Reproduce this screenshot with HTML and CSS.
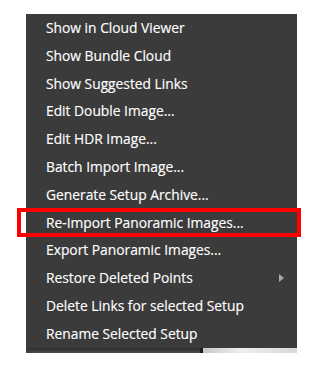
FILE: index.html
```html
<!DOCTYPE html>
<html lang="en">
<head>
  <meta charset="UTF-8" />
  <title>Context Menu</title>
  <link rel="stylesheet" href="styles.css">
</head>
<body>
  <div class="menu">
    <ul class="items">
      <li>Show in Cloud Viewer</li>
      <li>Show Bundle Cloud</li>
      <li>Show Suggested Links</li>
      <li>Edit Double Image...</li>
      <li>Edit HDR Image...</li>
      <li>Batch Import Image...</li>
      <li>Generate Setup Archive...</li>
      <li class="marked">Re-Import Panoramic Images...</li>
      <li>Export Panoramic Images...</li>
      <li class="sub">Restore Deleted Points <span class="arrow"></span></li>
      <li>Delete Links for selected Setup</li>
      <li>Rename Selected Setup</li>
    </ul>
    <div class="under">
      <div class="under-dark"></div>
      <div class="under-light"></div>
    </div>
  </div>
</body>
</html>
```

FILE: styles.css
```css
body {
  margin: 0;
  background: #fff;
  font-family: 'Open Sans', 'Segoe UI', sans-serif;
}
.menu {
  margin: 14px 0 0 26px;
  width: 271px;
}
.items {
  list-style: none;
  margin: 0;
  padding: 0;
  background: #3b3b3b;
}
.items li {
  position: relative;
  height: 27.8px;
  line-height: 27.8px;
  padding-left: 20px;
  font-size: 13.8px;
  color: #fff;
  white-space: nowrap;
  -webkit-text-stroke: 0.15px #fff;
}
.items li.marked::after {
  content: "";
  position: absolute;
  left: -9px;
  right: -4px;
  top: -1px;
  bottom: -1px;
  border: 4px solid #f00;
}
.arrow {
  position: absolute;
  right: 13px;
  top: 10px;
  width: 0;
  height: 0;
  border-top: 4px solid transparent;
  border-bottom: 4px solid transparent;
  border-left: 5px solid #a8a8a8;
}
.under {
  display: flex;
  height: 5px;
}
.under-dark {
  width: 174px;
  background: linear-gradient(#2e2e2e, #4a4a4a);
  border-right: 3px solid #1e1e1e;
}
.under-light {
  flex: 1;
  background: linear-gradient(90deg, #c8c8c8, #eeeeee 40%, #d8d8d8);
}
```
